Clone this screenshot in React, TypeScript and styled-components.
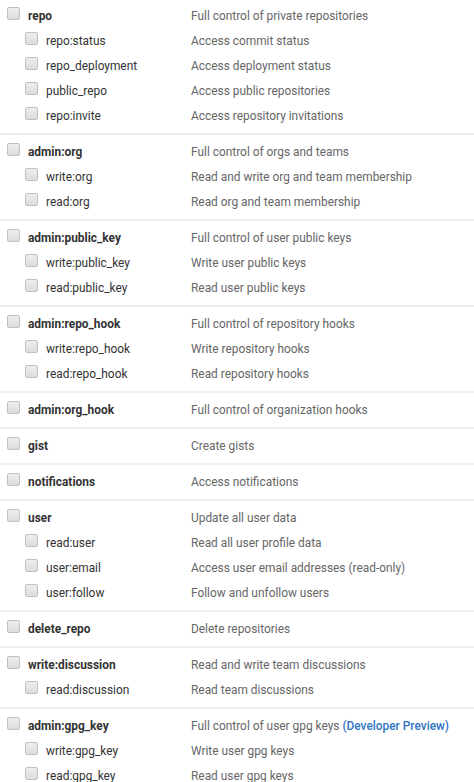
import React from 'react';
import styled, { createGlobalStyle } from 'styled-components';

const GlobalStyle = createGlobalStyle`
  html, body {
    margin: 0;
    padding: 0;
    background: #fff;
  }
  body {
    font-family: Roboto, 'Liberation Sans', sans-serif;
    -webkit-font-smoothing: antialiased;
  }
`;

const ScopeList = styled.div`
  display: flex;
  flex-direction: column;
  margin-top: -1px;
  width: 474px;
`;

const Group = styled.div`
  padding: 4.5px 0;
  border-bottom: 2px solid #eeeeee;
`;

const Row = styled.div`
  display: grid;
  grid-template-columns: 191px 1fr;
  height: 25px;
  align-items: center;
  font-size: 11.9px;
`;

const Label = styled.label<{ $child?: boolean }>`
  display: flex;
  align-items: center;
  gap: 8px;
  padding-left: ${(p) => (p.$child ? '25px' : '7px')};
  color: #333;
  font-weight: ${(p) => (p.$child ? 400 : 700)};
  white-space: nowrap;
`;

const Box = styled.span`
  width: 11px;
  height: 11px;
  flex: none;
  border: 1px solid #c0c0c0;
  border-radius: 2px;
  background: linear-gradient(#eeeeee, #dcdcdc);
  margin-bottom: 5px;
`;

const Description = styled.span`
  color: #666;
  white-space: nowrap;
`;

const Preview = styled.span`
  color: #2f75c4;
  font-weight: 500;
`;

type Scope = { name: string; desc: React.ReactNode; children?: [string, string][] };

const scopes: Scope[] = [
  {
    name: 'repo',
    desc: 'Full control of private repositories',
    children: [
      ['repo:status', 'Access commit status'],
      ['repo_deployment', 'Access deployment status'],
      ['public_repo', 'Access public repositories'],
      ['repo:invite', 'Access repository invitations'],
    ],
  },
  {
    name: 'admin:org',
    desc: 'Full control of orgs and teams',
    children: [
      ['write:org', 'Read and write org and team membership'],
      ['read:org', 'Read org and team membership'],
    ],
  },
  {
    name: 'admin:public_key',
    desc: 'Full control of user public keys',
    children: [
      ['write:public_key', 'Write user public keys'],
      ['read:public_key', 'Read user public keys'],
    ],
  },
  {
    name: 'admin:repo_hook',
    desc: 'Full control of repository hooks',
    children: [
      ['write:repo_hook', 'Write repository hooks'],
      ['read:repo_hook', 'Read repository hooks'],
    ],
  },
  { name: 'admin:org_hook', desc: 'Full control of organization hooks' },
  { name: 'gist', desc: 'Create gists' },
  { name: 'notifications', desc: 'Access notifications' },
  {
    name: 'user',
    desc: 'Update all user data',
    children: [
      ['read:user', 'Read all user profile data'],
      ['user:email', 'Access user email addresses (read-only)'],
      ['user:follow', 'Follow and unfollow users'],
    ],
  },
  { name: 'delete_repo', desc: 'Delete repositories' },
  {
    name: 'write:discussion',
    desc: 'Read and write team discussions',
    children: [['read:discussion', 'Read team discussions']],
  },
  {
    name: 'admin:gpg_key',
    desc: (
      <>
        Full control of user gpg keys <Preview>(Developer Preview)</Preview>
      </>
    ),
    children: [
      ['write:gpg_key', 'Write user gpg keys'],
      ['read:gpg_key', 'Read user gpg keys'],
    ],
  },
];

export default function App() {
  return (
    <>
      <GlobalStyle />
      <ScopeList>
        {scopes.map((s) => (
          <Group key={s.name}>
            <Row>
              <Label>
                <Box />
                {s.name}
              </Label>
              <Description>{s.desc}</Description>
            </Row>
            {s.children?.map(([name, desc]) => (
              <Row key={name}>
                <Label $child>
                  <Box />
                  {name}
                </Label>
                <Description>{desc}</Description>
              </Row>
            ))}
          </Group>
        ))}
      </ScopeList>
    </>
  );
}
